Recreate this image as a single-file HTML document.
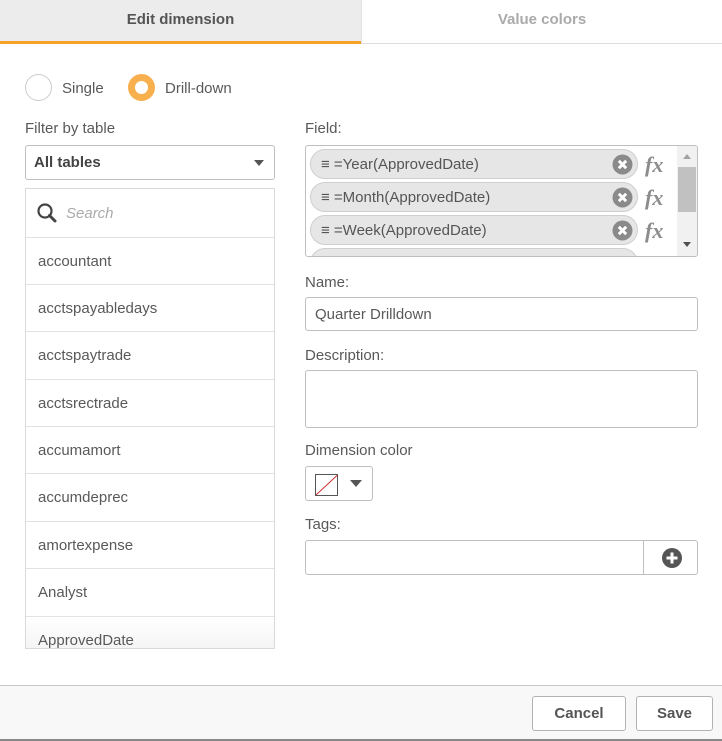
<!DOCTYPE html>
<html><head><meta charset="utf-8">
<style>
*{box-sizing:border-box;margin:0;padding:0}
body{width:722px;height:741px;overflow:hidden;background:#fff;font-family:"Liberation Sans",sans-serif;color:#595959;position:relative;font-size:15px}
.a{position:absolute}
.tab1{left:0;top:0;width:361px;height:44px;background:#ececec;border-bottom:3px solid #f5a027;text-align:center;line-height:40px;font-weight:bold;font-size:15px;color:#555}
.tab2{left:361px;top:0;width:361px;height:44px;background:#fff;border-bottom:1px solid #ddd;border-left:1px solid #e3e3e3;text-align:center;line-height:40px;font-weight:bold;font-size:15px;color:#aaa}
.lbl{font-size:15px;color:#595959}
.box{border:1px solid #bfbfbf;border-radius:3px;background:#fff}
.row{position:absolute;left:0;width:248px;height:47px;border-top:1px solid #e2e2e2;padding-left:12px;line-height:48px;font-size:15px;color:#595959}
.pill{position:absolute;left:4px;width:328px;height:30px;background:#e6e6e6;border:1px solid #cfcfcf;border-radius:15px;font-size:15px;line-height:29px;padding-left:10px;color:#555}
.x{position:absolute;right:4px;top:4px}
.fx{position:absolute;left:339px;font-family:"Liberation Serif",serif;font-style:italic;font-weight:bold;font-size:22px;color:#8c8c8c;line-height:22px}
.btn{border:1px solid #b3b3b3;border-radius:3px;background:#fff;text-align:center;font-weight:bold;font-size:15px;line-height:34px;color:#555}
</style></head><body>
<div class="a tab1">Edit dimension</div>
<div class="a tab2">Value colors</div>

<div class="a" style="left:25px;top:74px;width:27px;height:27px;border:1px solid #ccc;border-radius:50%"></div>
<div class="a lbl" style="left:62px;top:80px">Single</div>
<div class="a" style="left:128px;top:74px;width:27px;height:27px;border:7px solid #f8b04f;border-radius:50%;background:#fff"></div>
<div class="a lbl" style="left:165px;top:80px">Drill-down</div>

<div class="a lbl" style="left:25px;top:120px">Filter by table</div>
<div class="a box" style="left:25px;top:145px;width:250px;height:35px"><span style="position:absolute;left:8px;top:8px;font-weight:bold;color:#444">All tables</span><span style="position:absolute;right:10px;top:14px;width:0;height:0;border-left:5px solid transparent;border-right:5px solid transparent;border-top:6px solid #555"></span></div>

<div class="a" style="left:25px;top:188px;width:250px;height:461px;border:1px solid #d9d9d9;overflow:hidden">
<svg class="a" style="left:10px;top:13px" width="22" height="22" viewBox="0 0 22 22"><circle cx="9" cy="9" r="6.5" fill="none" stroke="#444" stroke-width="2.2"/><path d="M13.5 13.5L19 19" stroke="#444" stroke-width="3" stroke-linecap="round"/></svg>
<div class="a" style="left:40px;top:16px;font-style:italic;color:#aaa">Search</div>
<div class="row" style="top:48px">accountant</div>
<div class="row" style="top:95px">acctspayabledays</div>
<div class="row" style="top:142px">acctspaytrade</div>
<div class="row" style="top:190px">acctsrectrade</div>
<div class="row" style="top:237px">accumamort</div>
<div class="row" style="top:284px">accumdeprec</div>
<div class="row" style="top:332px">amortexpense</div>
<div class="row" style="top:379px">Analyst</div>
<div class="row" style="top:427px;background:linear-gradient(#fff,#f0f0f0)">ApprovedDate</div>
</div>

<div class="a lbl" style="left:305px;top:120px">Field:</div>
<div class="a box" style="left:305px;top:145px;width:393px;height:112px;overflow:hidden">
<div class="pill" style="top:3px">≡ =Year(ApprovedDate)<svg class="x" width="21" height="21" viewBox="0 0 20 20"><circle cx="10" cy="10" r="9.5" fill="#8a8a8a"/><path d="M6.5 6.5l7 7M13.5 6.5l-7 7" stroke="#fff" stroke-width="2.8"/></svg></div>
<div class="fx" style="top:8px">fx</div>
<div class="pill" style="top:36px">≡ =Month(ApprovedDate)<svg class="x" width="21" height="21" viewBox="0 0 20 20"><circle cx="10" cy="10" r="9.5" fill="#8a8a8a"/><path d="M6.5 6.5l7 7M13.5 6.5l-7 7" stroke="#fff" stroke-width="2.8"/></svg></div>
<div class="fx" style="top:41px">fx</div>
<div class="pill" style="top:69px">≡ =Week(ApprovedDate)<svg class="x" width="21" height="21" viewBox="0 0 20 20"><circle cx="10" cy="10" r="9.5" fill="#8a8a8a"/><path d="M6.5 6.5l7 7M13.5 6.5l-7 7" stroke="#fff" stroke-width="2.8"/></svg></div>
<div class="fx" style="top:74px">fx</div>
<div class="pill" style="top:102px"></div>
<div class="a" style="left:371px;top:0;width:20px;height:110px;background:#f1f1f1"></div>
<div class="a" style="left:372px;top:21px;width:18px;height:45px;background:#c1c1c1"></div>
<div class="a" style="left:377px;top:8px;border-left:4px solid transparent;border-right:4px solid transparent;border-bottom:5px solid #a3a3a3"></div>
<div class="a" style="left:377px;top:96px;border-left:4px solid transparent;border-right:4px solid transparent;border-top:5px solid #505050"></div>
</div>

<div class="a lbl" style="left:305px;top:274px">Name:</div>
<div class="a box" style="left:305px;top:297px;width:393px;height:34px;padding:8px 9px;color:#595959">Quarter Drilldown</div>
<div class="a lbl" style="left:305px;top:347px">Description:</div>
<div class="a box" style="left:305px;top:370px;width:393px;height:58px"></div>
<div class="a lbl" style="left:305px;top:442px">Dimension color</div>
<div class="a box" style="left:305px;top:466px;width:68px;height:35px">
<svg class="a" style="left:9px;top:7px" width="24" height="22" viewBox="0 0 24 22"><rect x="0.5" y="0.5" width="22" height="21" fill="#fff" stroke="#555"/><path d="M1 21L22.5 1" stroke="#c33" stroke-width="1"/></svg>
<span style="position:absolute;left:44px;top:13px;border-left:6px solid transparent;border-right:6px solid transparent;border-top:7px solid #555"></span></div>
<div class="a lbl" style="left:305px;top:516px">Tags:</div>
<div class="a box" style="left:305px;top:540px;width:393px;height:35px">
<div class="a" style="left:337px;top:0;width:1px;height:33px;background:#bfbfbf"></div>
<svg class="a" style="left:355px;top:6px" width="22" height="22" viewBox="0 0 22 22"><circle cx="11" cy="11" r="10" fill="#555"/><path d="M11 5.5v11M5.5 11h11" stroke="#fff" stroke-width="3"/></svg></div>

<div class="a" style="left:0;top:685px;width:722px;height:56px;background:#f8f8f8;border-top:1px solid #c8c8c8;border-bottom:2px solid #888"></div>
<div class="a btn" style="left:532px;top:696px;width:94px;height:35px">Cancel</div>
<div class="a btn" style="left:636px;top:696px;width:77px;height:35px">Save</div>
</body></html>
